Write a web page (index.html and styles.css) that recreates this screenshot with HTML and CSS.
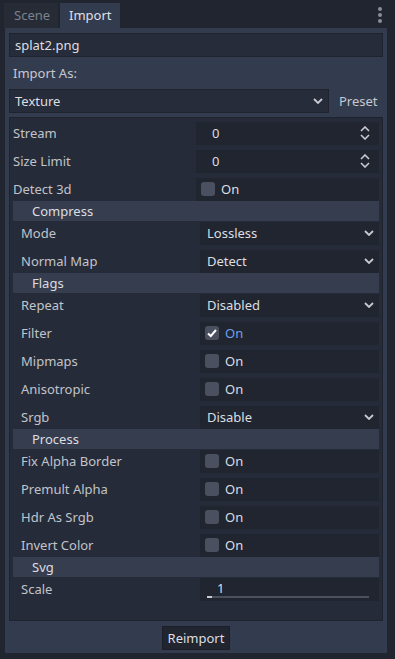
FILE: index.html
```html
<!DOCTYPE html>
<html lang="en">
<head>
  <meta charset="UTF-8" />
  <title>Import</title>
  <link rel="stylesheet" href="styles.css">
</head>
<body>

<div class="tabbar">
  <div class="tab">Scene</div>
  <div class="tab active">Import</div>
  <div class="menu"><span></span><span></span><span></span></div>
</div>

<div class="panel">
  <div class="field file">splat2.png</div>
  <div class="label-line">Import As:</div>
  <div class="as-row">
    <div class="field dropdown">Texture
      <svg class="chev" width="10" height="6" viewBox="0 0 10 6"><path d="M1 1 L5 5 L9 1" fill="none" stroke="#c8cad0" stroke-width="1.8"/></svg>
    </div>
    <div class="preset">Preset</div>
  </div>

  <div class="inspector">
    <div class="prop">
      <div class="name">Stream</div>
      <div class="value spin">0
        <svg class="spin-ic" width="10" height="14" viewBox="0 0 10 14"><path d="M1 5 L5 1 L9 5 M1 9 L5 13 L9 9" fill="none" stroke="#c8cad0" stroke-width="1.6"/></svg>
      </div>
    </div>
    <div class="prop">
      <div class="name">Size Limit</div>
      <div class="value spin">0
        <svg class="spin-ic" width="10" height="14" viewBox="0 0 10 14"><path d="M1 5 L5 1 L9 5 M1 9 L5 13 L9 9" fill="none" stroke="#c8cad0" stroke-width="1.6"/></svg>
      </div>
    </div>
    <div class="prop">
      <div class="name">Detect 3d</div>
      <div class="value check"><span class="box"></span>On</div>
    </div>

    <div class="section">Compress</div>
    <div class="prop sub">
      <div class="name">Mode</div>
      <div class="value select">Lossless
        <svg class="chev" width="10" height="6" viewBox="0 0 10 6"><path d="M1 1 L5 5 L9 1" fill="none" stroke="#c8cad0" stroke-width="1.8"/></svg>
      </div>
    </div>
    <div class="prop sub">
      <div class="name">Normal Map</div>
      <div class="value select">Detect
        <svg class="chev" width="10" height="6" viewBox="0 0 10 6"><path d="M1 1 L5 5 L9 1" fill="none" stroke="#c8cad0" stroke-width="1.8"/></svg>
      </div>
    </div>

    <div class="section">Flags</div>
    <div class="prop sub">
      <div class="name">Repeat</div>
      <div class="value select">Disabled
        <svg class="chev" width="10" height="6" viewBox="0 0 10 6"><path d="M1 1 L5 5 L9 1" fill="none" stroke="#c8cad0" stroke-width="1.8"/></svg>
      </div>
    </div>
    <div class="prop sub">
      <div class="name">Filter</div>
      <div class="value check on">
        <span class="box"><svg width="14" height="14" viewBox="0 0 14 14"><path d="M3 7.5 L5.8 10 L11 4" fill="none" stroke="#fff" stroke-width="2"/></svg></span>On
      </div>
    </div>
    <div class="prop sub">
      <div class="name">Mipmaps</div>
      <div class="value check"><span class="box"></span>On</div>
    </div>
    <div class="prop sub">
      <div class="name">Anisotropic</div>
      <div class="value check"><span class="box"></span>On</div>
    </div>
    <div class="prop sub">
      <div class="name">Srgb</div>
      <div class="value select">Disable
        <svg class="chev" width="10" height="6" viewBox="0 0 10 6"><path d="M1 1 L5 5 L9 1" fill="none" stroke="#c8cad0" stroke-width="1.8"/></svg>
      </div>
    </div>

    <div class="section">Process</div>
    <div class="prop sub">
      <div class="name">Fix Alpha Border</div>
      <div class="value check"><span class="box"></span>On</div>
    </div>
    <div class="prop sub">
      <div class="name">Premult Alpha</div>
      <div class="value check"><span class="box"></span>On</div>
    </div>
    <div class="prop sub">
      <div class="name">Hdr As Srgb</div>
      <div class="value check"><span class="box"></span>On</div>
    </div>
    <div class="prop sub">
      <div class="name">Invert Color</div>
      <div class="value check"><span class="box"></span>On</div>
    </div>

    <div class="section">Svg</div>
    <div class="prop sub">
      <div class="name">Scale</div>
      <div class="value range">
        <span class="num">1</span>
        <div class="track"><div class="fill"></div></div>
      </div>
    </div>
  </div>

  <div class="btn-row"><div class="btn">Reimport</div></div>
</div>

</body>
</html>
```

FILE: styles.css
```css
* { box-sizing: border-box; }
html, body {
  margin: 0;
  padding: 0;
  width: 100%;
  height: 100%;
  overflow: hidden;
  background: #21252f;
  font-family: "Noto Sans", sans-serif;
  font-size: 13px;
  color: #dcdee2;
}

.tabbar {
  height: 28px;
  display: flex;
  align-items: flex-end;
  padding-left: 4px;
  gap: 2px;
  position: relative;
}

.tab {
  height: 25px;
  line-height: 24px;
  padding: 0 10px;
  background: #262b36;
  color: #7d828c;
  width: 54px;
}

.tab.active {
  background: #333b4e;
  color: #dfe0e3;
  width: 60px;
  padding-left: 9px;
}

.menu {
  position: absolute;
  right: 13px;
  top: 7px;
  display: flex;
  flex-direction: column;
  gap: 2px;
}
.menu span {
  width: 4px;
  height: 4px;
  border-radius: 50%;
  background: #8a8e98;
}

.panel {
  margin-left: 5px;
  width: 382px;
  height: 625px;
  background: #333b4e;
  padding: 5px 4px 3px 4px;
  display: flex;
  flex-direction: column;
  gap: 4px;
}

.field {
  height: 24px;
  line-height: 22px;
  background: #272c3a;
  border: 1px solid #1f232d;
  padding: 0 5px;
  color: #dcdee2;
}

.label-line {
  height: 24px;
  line-height: 24px;
  padding-left: 4px;
  color: #c6c8ce;
}

.as-row {
  display: flex;
  align-items: center;
}

.dropdown {
  width: 320px;
  display: flex;
  align-items: center;
  justify-content: space-between;
  padding-right: 5px;
}

.preset {
  margin-left: 10px;
  color: #c6c8ce;
}

.inspector {
  height: 504px;
  background: #262b39;
  border: 1px solid #1f232d;
  padding: 3px 3px 0 3px;
  display: flex;
  flex-direction: column;
}

.prop {
  height: 24px;
  display: flex;
  align-items: center;
}
.prop + .prop { margin-top: 4px; }

.prop .name {
  width: 183px;
  color: #c1c4ca;
  white-space: nowrap;
}
.prop.sub .name {
  width: 187px;
  padding-left: 8px;
}

.value {
  flex: 1;
  height: 23px;
  background: #21252f;
  display: flex;
  align-items: center;
  color: #dcdee2;
}

.spin { padding: 0 9px 0 16px; justify-content: space-between; }
.select { padding: 0 5px 0 7px; justify-content: space-between; }

.check { padding-left: 5px; gap: 6px; }
.check .box {
  width: 14px;
  height: 14px;
  border-radius: 3px;
  background: #4b5060;
  display: flex;
}
.check.on { color: #6fa1ea; }

.range {
  position: relative;
  padding-left: 17px;
}
.range .num { margin-top: -3px; }
.range .track {
  position: absolute;
  left: 7px;
  right: 10px;
  bottom: 3px;
  height: 2px;
  background: #4a505e;
}
.range .fill {
  width: 5px;
  height: 2px;
  background: #c8cad0;
}

.section {
  height: 20px;
  line-height: 20px;
  background: #363d4e;
  padding-left: 19px;
  margin-right: 0;
  color: #dcdee2;
}

.btn-row {
  display: flex;
  justify-content: center;
  margin-top: 1px;
}
.btn {
  height: 24px;
  line-height: 22px;
  padding: 0 5px;
  background: #21252f;
  border: 1px solid #1c1f27;
  color: #dcdee2;
}
```
